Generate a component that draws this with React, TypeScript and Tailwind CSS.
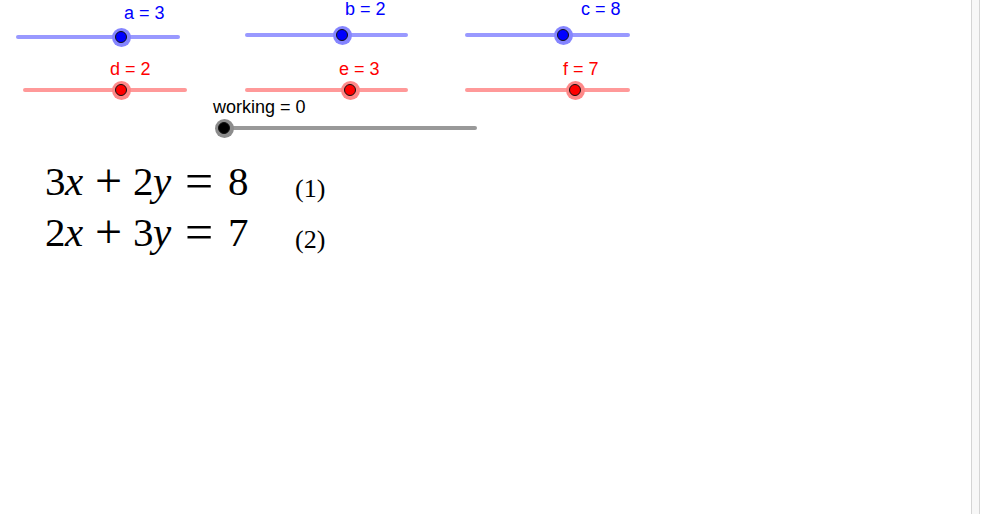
import React from "react";

/* ────────────────────────────────────────────────────────────
   DATA
──────────────────────────────────────────────────────────── */
type Tone = "blue" | "red" | "gray";

const SLIDERS: {
  label: string;
  tone: Tone;
  x1: number;
  x2: number;
  y: number;
  knob: number;
  lx: number;
  ly: number;
}[] = [
  { label: "a = 3", tone: "blue", x1: 16, x2: 180, y: 37, knob: 121, lx: 124, ly: 4 },
  { label: "b = 2", tone: "blue", x1: 245, x2: 408, y: 35, knob: 342, lx: 345, ly: 0 },
  { label: "c = 8", tone: "blue", x1: 465, x2: 630, y: 35, knob: 563, lx: 581, ly: 0 },
  { label: "d = 2", tone: "red", x1: 23, x2: 187, y: 90, knob: 121, lx: 110, ly: 60 },
  { label: "e = 3", tone: "red", x1: 245, x2: 408, y: 90, knob: 350, lx: 339, ly: 60 },
  { label: "f = 7", tone: "red", x1: 465, x2: 630, y: 90, knob: 575, lx: 563, ly: 60 },
  { label: "working = 0", tone: "gray", x1: 224, x2: 477, y: 128, knob: 224, lx: 213, ly: 98 },
];

const TONES: Record<Tone, { line: string; text: string; halo: string; fill: string }> = {
  blue: { line: "bg-[#9999ff]", text: "text-[#0000ff]", halo: "bg-[#8585ff]", fill: "bg-[#0000ff]" },
  red: { line: "bg-[#ff9999]", text: "text-[#ff0000]", halo: "bg-[#ff8888]", fill: "bg-[#ff0000]" },
  gray: { line: "bg-[#999999]", text: "text-black", halo: "bg-[#8c8c8c]", fill: "bg-black" },
};

const EQUATIONS = [
  { a: "3", b: "2", c: "8", tag: "(1)" },
  { a: "2", b: "3", c: "7", tag: "(2)" },
];

/* ────────────────────────────────────────────────────────────
   SLIDER
──────────────────────────────────────────────────────────── */
function Slider({ s }: { s: (typeof SLIDERS)[0] }) {
  const t = TONES[s.tone];
  return (
    <>
      <div
        className={`absolute ${t.text} text-[18px] leading-none whitespace-nowrap`}
        style={{ left: s.lx, top: s.ly }}
      >
        {s.label}
      </div>
      <div
        className={`absolute h-[4px] rounded-full ${t.line}`}
        style={{ left: s.x1, top: s.y - 2, width: s.x2 - s.x1 }}
      />
      <div
        className={`absolute w-[19px] h-[19px] rounded-full ${t.halo} flex items-center justify-center`}
        style={{ left: s.knob - 9.5, top: s.y - 9.5 }}
      >
        <div className={`w-[12px] h-[12px] rounded-full ${t.fill} border border-[#111]`} />
      </div>
    </>
  );
}

/* ────────────────────────────────────────────────────────────
   PAGE
──────────────────────────────────────────────────────────── */
export default function App() {
  return (
    <div className="relative w-[981px] h-[516px] bg-white overflow-hidden font-['Liberation_Sans',Arial,sans-serif]">
      {SLIDERS.map((s) => (
        <Slider key={s.label} s={s} />
      ))}

      {/* Equations */}
      <div className="absolute left-[45px] top-[153px] flex flex-col gap-[10px] font-['Liberation_Serif','Times_New_Roman',serif] text-black">
        {EQUATIONS.map((e) => (
          <div key={e.tag} className="flex items-baseline text-[41px] leading-none h-[41px]">
            <span className="w-[20px]">{e.a}</span>
            <span className="w-[30px] italic">x</span>
            <span className="w-[38px] text-[48px] translate-y-[2px]">+</span>
            <span className="w-[20px]">{e.b}</span>
            <span className="w-[32px] italic">y</span>
            <span className="w-[43px] text-[50px] translate-y-[3px]">=</span>
            <span className="w-[67px]">{e.c}</span>
            <span className="text-[26px] translate-y-[2px]">{e.tag}</span>
          </div>
        ))}
      </div>

      {/* Right edge strip */}
      <div className="absolute left-[971px] top-0 w-[9px] h-[514px] bg-[#f7f7f7] border-x border-[#d4d4d4]" />
    </div>
  );
}
